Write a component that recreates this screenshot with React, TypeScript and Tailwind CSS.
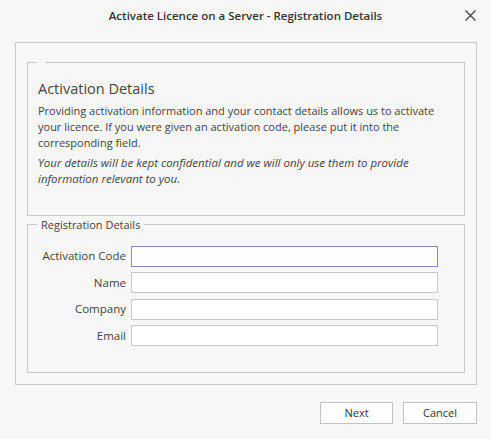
import React from "react";

const font = { fontFamily: '"Open Sans", "Noto Sans", sans-serif' };

function Row({ label, focused }: { label: string; focused?: boolean }) {
  return (
    <div className="flex items-center">
      <label className="w-[99px] pr-[5px] text-right text-[11.5px] leading-none text-[#444]">{label}</label>
      <input
        type="text"
        className={
          "h-[21px] w-[307px] bg-white border outline-none " +
          (focused ? "border-[#8e8ab8]" : "border-[#c9c9c9]")
        }
      />
    </div>
  );
}

export default function App() {
  return (
    <div className="w-[491px] h-[439px] bg-[#f7f7f7] text-[#444] flex flex-col" style={font}>
      <div className="relative h-[30px] flex items-center justify-center">
        <span className="text-[11.5px] font-semibold text-[#333] pt-[1px]">
          Activate Licence on a Server - Registration Details
        </span>
        <svg className="absolute right-[15px] top-[10px]" width="11" height="11" viewBox="0 0 11 11">
          <path d="M0.5 0.5 L10.5 10.5 M10.5 0.5 L0.5 10.5" stroke="#444" strokeWidth="1.3" fill="none" />
        </svg>
      </div>
      <div className="mt-[12px] ml-[15px] w-[462px] h-[343px] border border-[#c9c9c9] pt-[19px] pl-[11px] pr-[11px] pb-[11px] flex flex-col">
        <fieldset className="border border-[#c9c9c9] h-[154px] px-[10px] pb-0">
          <legend className="ml-[-1px] w-[8px] h-0 p-0"></legend>
          <h2 className="mt-[16px] text-[14.5px] leading-[20px] text-[#444]">Activation Details</h2>
          <p className="mt-[4px] text-[11px] leading-[16px] text-[#444]">
            Providing activation information and your contact details allows us to activate your licence. If you were
            given an activation code, please put it into the corresponding field.
          </p>
          <p className="mt-[4px] text-[11.5px] leading-[16px] italic text-[#444]">
            Your details will be kept confidential and we will only use them to provide information relevant to you.
          </p>
        </fieldset>
        <fieldset className="border border-[#c9c9c9] h-[157px] px-[4px] mt-[1px]">
          <legend className="ml-[5px] px-[4px] text-[11px] leading-[16px] text-[#444]">Registration Details</legend>
          <div className="mt-[13px] flex flex-col gap-[5.5px]">
            <Row label="Activation Code" focused />
            <Row label="Name" />
            <Row label="Company" />
            <Row label="Email" />
          </div>
        </fieldset>
      </div>
      <div className="mt-[17px] mr-[14px] flex justify-end gap-[10px]">
        <button className="w-[73px] h-[22px] bg-[#fdfdfd] border border-[#c3c3c3] text-[11px] text-[#333]">
          Next
        </button>
        <button className="w-[74px] h-[22px] bg-[#fdfdfd] border border-[#c3c3c3] text-[11px] text-[#333]">
          Cancel
        </button>
      </div>
    </div>
  );
}
